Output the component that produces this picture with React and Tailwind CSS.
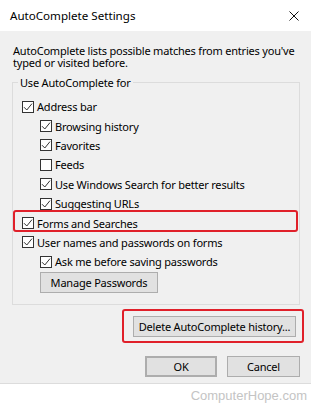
import { useState } from 'react';

const CheckBox = ({ checked }) => (
  <span className="w-[12px] h-[12px] shrink-0 border border-[#333] bg-white flex items-center justify-center">
    {checked && (
      <svg width="10" height="10" viewBox="0 0 10 10">
        <path d="M1 5.2 L3.8 8 L9 1.6" fill="none" stroke="#333" strokeWidth="1" />
      </svg>
    )}
  </span>
);

const Row = ({ label, checked, indent, marked }) => (
  <div className={`relative h-[19.4px] flex items-center gap-[3px] ${indent ? 'pl-[27px]' : 'pl-[9px]'}`}>
    <CheckBox checked={checked} />
    <span>{label}</span>
    {/* red highlight drawn over the row */}
    {marked && (
      <div className="absolute left-[0px] right-[1px] top-[-3px] bottom-[1px] border-2 border-[#e0202a] rounded-[3px]" />
    )}
  </div>
);

const Button = ({ children, className = '' }) => (
  <button className={`h-[21px] whitespace-nowrap bg-[#e1e1e1] border border-[#adadad] flex items-center justify-center ${className}`}>
    {children}
  </button>
);

const App = () => {
  const [items] = useState([
    { label: 'Address bar', checked: true },
    { label: 'Browsing history', checked: true, indent: true },
    { label: 'Favorites', checked: true, indent: true },
    { label: 'Feeds', checked: false, indent: true },
    { label: 'Use Windows Search for better results', checked: true, indent: true },
    { label: 'Suggesting URLs', checked: true, indent: true },
    { label: 'Forms and Searches', checked: true, marked: true },
    { label: 'User names and passwords on forms', checked: true },
    { label: 'Ask me before saving passwords', checked: true, indent: true },
  ]);

  return (
    <div className="w-[311px] h-[406px] bg-white text-black text-[11px] tracking-[-0.2px] leading-[13px] font-['Noto_Sans',sans-serif] flex flex-col overflow-hidden">

      {/* Title bar */}
      <div className="h-[31px] shrink-0 flex items-center justify-between pl-[10px] pr-[12px]">
        <span className="text-[11.6px] tracking-normal">AutoComplete Settings</span>
        <svg width="10" height="10" viewBox="0 0 10 10">
          <path d="M0.5 0.5 L9.5 9.5 M9.5 0.5 L0.5 9.5" stroke="#111" strokeWidth="1" />
        </svg>
      </div>

      {/* Body */}
      <div className="h-[353px] shrink-0 bg-[#f0f0f0] border-b border-[#dcdcdc] pl-[12px] pr-[11px] pt-[14px] flex flex-col">
        <p className="ml-[1px] leading-[12px]">
          AutoComplete lists possible matches from entries you've typed or visited before.
        </p>

        <fieldset className="mt-[7px] border border-[#dcdcdc] pt-[8px] pb-[11px]">
          <legend className="ml-[5px] px-[2px]">Use AutoComplete for</legend>
          {items.map((item) => (
            <Row key={item.label} {...item} />
          ))}
          <Button className="ml-[27px] w-[118px]">Manage Passwords</Button>
        </fieldset>

        <div className="mt-[4px] -mr-[4px] self-end border-2 border-[#e0202a] rounded-[3px] pt-[5px] pb-[4px] pl-[9px] pr-[6px]">
          <Button className="w-[163px]">Delete AutoComplete history...</Button>
        </div>

        <div className="mt-[13px] flex justify-end gap-[10px]">
          <Button className="w-[72px] border-2 border-[#0078d7]">OK</Button>
          <Button className="w-[73px]">Cancel</Button>
        </div>
      </div>

      {/* Watermark */}
      <div className="flex-1 flex items-center justify-end pr-[4px] text-[13px] tracking-normal text-[#c4c4c4] font-['Liberation_Sans',sans-serif]">
        ComputerHope.com
      </div>
    </div>
  );
};

export default App;
